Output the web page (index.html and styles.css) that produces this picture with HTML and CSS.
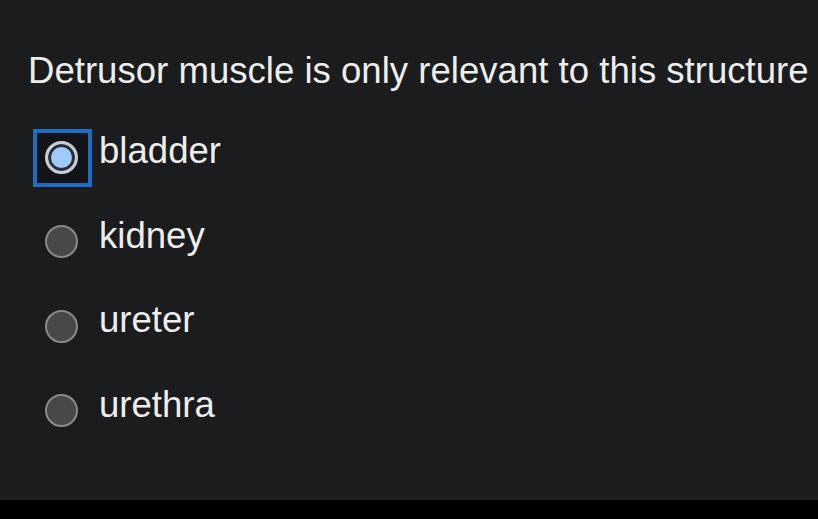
FILE: index.html
```html
<!DOCTYPE html>
<html lang="en">
    <head>
        <meta charset="UTF-8">
        <title>Question</title>
        <link rel="stylesheet" href="styles.css">
    </head>
    <body>
        <div class="panel">
            <div class="question">Detrusor muscle is only relevant to this structure</div>
            <div class="options">
                <label class="option">
                    <span class="radio checked"></span>
                    <span class="option-label">bladder</span>
                </label>
                <label class="option">
                    <span class="radio"></span>
                    <span class="option-label">kidney</span>
                </label>
                <label class="option">
                    <span class="radio"></span>
                    <span class="option-label">ureter</span>
                </label>
                <label class="option">
                    <span class="radio"></span>
                    <span class="option-label">urethra</span>
                </label>
            </div>
        </div>
    </body>
</html>
```

FILE: styles.css
```css
body {
    margin: 0;
    background-color: #000000;
    font-family: 'Liberation Sans', Arial, sans-serif;
    font-size: 36.6px;
    color: #ededed;
}

.panel {
    height: 500px;
    box-sizing: border-box;
    padding: 49px 0 0 28px;
    background-color: #1b1c1e;
    overflow: hidden;
}

.question {
    line-height: 44px;
    white-space: nowrap;
}

.options {
    display: flex;
    flex-direction: column;
    gap: 40.5px;
    margin-top: 36px;
}

.option {
    display: flex;
    align-items: center;
    height: 44px;
    line-height: 44px;
}
.option:first-child {
    position: relative;
    z-index: 0;
}

.radio {
    position: relative;
    display: block;
    flex: none;
    width: 33px;
    height: 33px;
    margin: 12px 21px 0 17px;
    box-sizing: border-box;
    border-radius: 50%;
    border: 2px solid #8a8a8a;
    background-color: #484848;
}
.radio.checked {
    border: 3px solid #c9cdd3;
    background-color: #a0c9fd;
    box-shadow: inset 0 0 0 3px #2a2d33;
}
.radio.checked::after {
    content: '';
    position: absolute;
    left: -15px;
    top: -15px;
    width: 51px;
    height: 50px;
    border: 4px solid #1d6ec2;
    z-index: -1;
    background-color: #121417;
}
```
